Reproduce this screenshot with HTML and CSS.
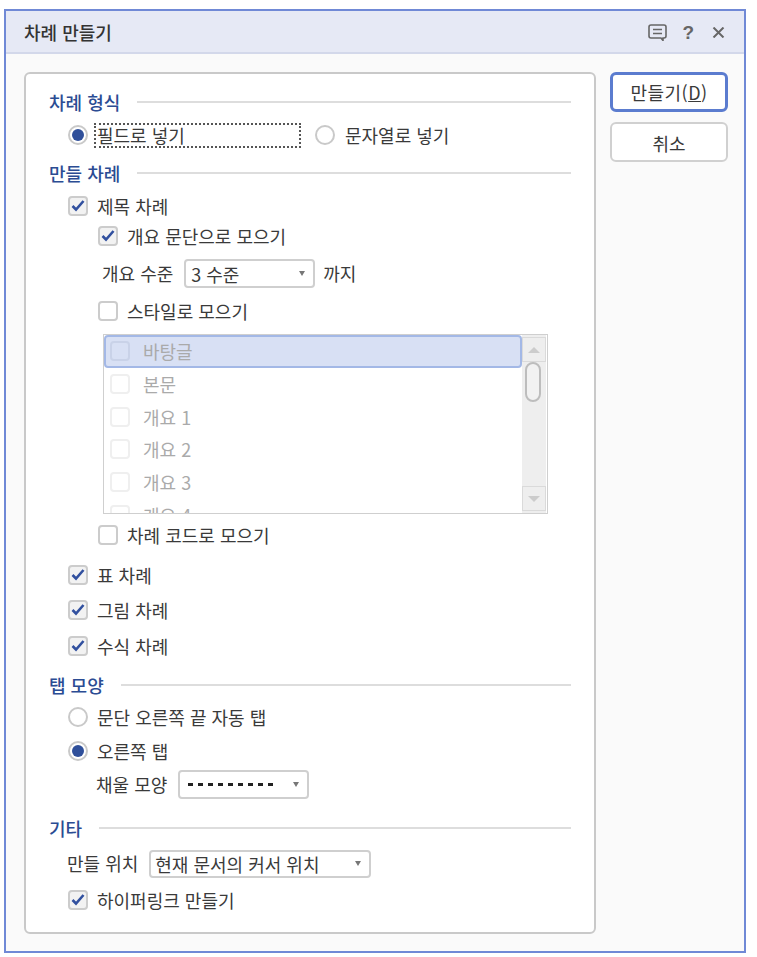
FILE: index.html
```html
<!DOCTYPE html>
<html lang="ko">
<head>
  <meta charset="UTF-8" />
  <title>차례 만들기</title>
  <link rel="stylesheet" href="styles.css">
</head>
<body>

  <div class="dialog">
    <div class="title-bar">
      <span class="title">차례 만들기</span>
      <div class="title-icons">
        <svg class="icon-comment" width="19" height="17" viewBox="0 0 19 17" fill="none" stroke="#666" stroke-width="1.6">
          <path d="M3 1h13a2 2 0 0 1 2 2v9a2 2 0 0 1-2 2h-1v2.5l-2-2.5H3a2 2 0 0 1-2-2V3a2 2 0 0 1 2-2z" />
          <path d="M5 5.5h9M5 9.5h9" />
        </svg>
        <span class="icon-help">?</span>
        <svg class="icon-close" width="13" height="11" viewBox="0 0 13 11" fill="none" stroke="#666" stroke-width="2">
          <path d="M1.5 .5l10 10M11.5 .5l-10 10" />
        </svg>
      </div>
    </div>

    <div class="dialog-body">
      <div class="panel">
        <div class="row section"><span>차례 형식</span><i></i></div>

        <div class="row mt-3 indent-1">
          <span class="radio on"></span>
          <span class="focus-box">필드로 넣기</span>
          <span class="radio second"></span>
          <span class="label second-label">문자열로 넣기</span>
        </div>

        <div class="row section mt-8"><span>만들 차례</span><i></i></div>

        <div class="row mt-3 indent-1">
          <span class="check on"><svg viewBox="0 0 16 16"><path d="M2.5 8l3.5 3.5 7.5-8.5" /></svg></span>
          <span class="label">제목 차례</span>
        </div>
        <div class="row indent-2">
          <span class="check on"><svg viewBox="0 0 16 16"><path d="M2.5 8l3.5 3.5 7.5-8.5" /></svg></span>
          <span class="label">개요 문단으로 모으기</span>
        </div>
        <div class="row mt-7 level-row">
          <span>개요 수준</span>
          <span class="combo combo-level">3 수준<b></b></span>
          <span>까지</span>
        </div>
        <div class="row mt-8 indent-2">
          <span class="check"></span>
          <span class="label">스타일로 모으기</span>
        </div>

        <div class="style-list">
          <div class="style-items">
            <div class="style-item selected"><span class="check"></span>바탕글</div>
            <div class="style-item"><span class="check"></span>본문</div>
            <div class="style-item"><span class="check"></span>개요 1</div>
            <div class="style-item"><span class="check"></span>개요 2</div>
            <div class="style-item"><span class="check"></span>개요 3</div>
            <div class="style-item"><span class="check"></span>개요 4</div>
          </div>
          <div class="scrollbar">
            <div class="scroll-btn"><b class="up"></b></div>
            <div class="scroll-thumb"></div>
            <div class="scroll-track"></div>
            <div class="scroll-btn"><b class="down"></b></div>
          </div>
        </div>

        <div class="row mt-6 indent-2">
          <span class="check"></span>
          <span class="label">차례 코드로 모으기</span>
        </div>
        <div class="row mt-10 indent-1">
          <span class="check on"><svg viewBox="0 0 16 16"><path d="M2.5 8l3.5 3.5 7.5-8.5" /></svg></span>
          <span class="label">표 차례</span>
        </div>
        <div class="row mt-5 indent-1">
          <span class="check on"><svg viewBox="0 0 16 16"><path d="M2.5 8l3.5 3.5 7.5-8.5" /></svg></span>
          <span class="label">그림 차례</span>
        </div>
        <div class="row mt-6 indent-1">
          <span class="check on"><svg viewBox="0 0 16 16"><path d="M2.5 8l3.5 3.5 7.5-8.5" /></svg></span>
          <span class="label">수식 차례</span>
        </div>

        <div class="row section mt-9"><span>탭 모양</span><i></i></div>

        <div class="row mt-2 indent-1">
          <span class="radio"></span>
          <span class="label">문단 오른쪽 끝 자동 탭</span>
        </div>
        <div class="row mt-4 indent-1">
          <span class="radio on"></span>
          <span class="label">오른쪽 탭</span>
        </div>
        <div class="row mt-3 fill-row">
          <span>채울 모양</span>
          <span class="combo combo-fill"><em class="dashes"></em><b></b></span>
        </div>

        <div class="row section mt-14"><span>기타</span><i></i></div>

        <div class="row mt-5 place-row">
          <span>만들 위치</span>
          <span class="combo combo-place">현재 문서의 커서 위치<b></b></span>
        </div>
        <div class="row mt-7 indent-1">
          <span class="check on"><svg viewBox="0 0 16 16"><path d="M2.5 8l3.5 3.5 7.5-8.5" /></svg></span>
          <span class="label">하이퍼링크 만들기</span>
        </div>
      </div>

      <div class="buttons">
        <button class="btn primary">만들기(<u>D</u>)</button>
        <button class="btn">취소</button>
      </div>
    </div>
  </div>

</body>
</html>
```

FILE: styles.css
```css
body {
  margin: 0;
  padding: 9px 0 0 4px;
  background-color: #ffffff;
  color: #3a3a3a;
  font-family: "Noto Sans CJK KR", "Noto Sans", sans-serif;
  font-size: 18px;
}

.dialog {
  width: 742px;
  height: 944px;
  box-sizing: border-box;
  border: 2px solid #7089d6;
  background-color: #fafafa;
}

.title-bar {
  height: 43px;
  box-sizing: border-box;
  padding: 0 19px 0 18px;
  display: flex;
  align-items: center;
  justify-content: space-between;
  background-color: #e6e9f5;
  border-bottom: 2px solid #d3d8ea;
}

.title {
  font-weight: 500;
  color: #333333;
}

.title-icons {
  padding-top: 2px;
  display: flex;
  align-items: center;
}

.icon-help {
  margin: 0 18px 0 15px;
  font-family: "Liberation Sans", sans-serif;
  font-size: 19px;
  font-weight: 700;
  color: #666666;
}

.dialog-body {
  display: flex;
  gap: 14px;
  padding: 18px 0 0 18px;
}

.panel {
  width: 572px;
  height: 862px;
  box-sizing: border-box;
  padding: 13px 23px 0 24px;
  background-color: #ffffff;
  border: 2px solid #c9c9c9;
  border-radius: 6px;
}

.row {
  height: 30px;
  display: flex;
  align-items: center;
}

.mt-2 { margin-top: 2px; }
.mt-3 { margin-top: 3px; }
.mt-4 { margin-top: 4px; }
.mt-5 { margin-top: 5px; }
.mt-6 { margin-top: 6px; }
.mt-7 { margin-top: 7px; }
.mt-8 { margin-top: 8px; }
.mt-9 { margin-top: 9px; }
.mt-10 { margin-top: 10px; }
.mt-14 { margin-top: 14px; }

.indent-1 { padding-left: 18px; }
.indent-2 { padding-left: 48px; }

.section {
  gap: 17px;
  font-weight: 500;
  color: #2b4c93;
}

.section span {
  margin-left: -1px;
}

.section i {
  flex: 1;
  height: 2px;
  background-color: #dddddd;
}

.label {
  margin-left: 9px;
}

.second-label {
  margin-left: 10px;
}

.radio {
  width: 20px;
  height: 20px;
  box-sizing: border-box;
  flex-shrink: 0;
  display: flex;
  align-items: center;
  justify-content: center;
  background-color: #ffffff;
  border: 2px solid #c9c9c9;
  border-radius: 50%;
}

.radio.on::after {
  content: "";
  width: 12px;
  height: 12px;
  background-color: #2f4f9a;
  border-radius: 50%;
}

.radio.second {
  margin-left: 14px;
}

.focus-box {
  width: 207px;
  height: 25px;
  box-sizing: border-box;
  margin-left: 6px;
  padding-left: 1px;
  line-height: 21px;
  border: 2px dotted #555555;
}

.check {
  width: 20px;
  height: 20px;
  box-sizing: border-box;
  flex-shrink: 0;
  background-color: #ffffff;
  border: 2px solid #cccccc;
  border-radius: 4px;
}

.check.on {
  background-color: #f2f2f2;
}

.check svg {
  display: block;
  width: 16px;
  height: 16px;
  fill: none;
  stroke: #31509f;
  stroke-width: 2.6;
}

.combo {
  height: 29px;
  box-sizing: border-box;
  margin-top: 1px;
  padding-left: 5px;
  display: flex;
  align-items: center;
  justify-content: space-between;
  background-color: #ffffff;
  border: 2px solid #cfcfcf;
  border-radius: 4px;
}

.combo b {
  width: 0;
  height: 0;
  margin-right: 8px;
  border-left: 3.5px solid transparent;
  border-right: 3.5px solid transparent;
  border-top: 5px solid #777777;
}

.level-row { padding-left: 52px; gap: 11px; }
.combo-level { width: 131px; }
.level-row span:last-child { margin-left: -3px; }

.fill-row { padding-left: 46px; gap: 11px; }
.combo-fill { width: 131px; }

.dashes {
  width: 88px;
  height: 3px;
  margin-left: 3px;
  background: repeating-linear-gradient(90deg, #222222 0 5px, transparent 5px 10px);
}

.place-row { padding-left: 17px; gap: 11px; }
.combo-place { width: 222px; height: 28px; padding-left: 4px; }

.style-list {
  width: 445px;
  height: 180px;
  box-sizing: border-box;
  margin: 8px 0 0 53px;
  display: flex;
  background-color: #ffffff;
  border: 1px solid #cfcfcf;
}

.style-items {
  flex: 1;
  overflow: hidden;
}

.style-item {
  height: 32.7px;
  box-sizing: border-box;
  padding-left: 5px;
  display: flex;
  align-items: center;
  gap: 13px;
  color: #aaaaaa;
  border: 1px solid transparent;
  border-radius: 4px;
}

.style-item .check {
  border-color: #efefef;
}

.style-item.selected {
  background-color: #d8e0f4;
  border: 2px solid #a3b8e6;
  padding-left: 4px;
}

.style-item.selected .check {
  background-color: transparent;
  border-color: #c9d2e8;
}

.scrollbar {
  width: 24px;
  padding: 2px 0;
  margin-right: 1px;
  display: flex;
  flex-direction: column;
  background-color: #eeeeee;
}

.scroll-btn {
  height: 25px;
  box-sizing: border-box;
  display: flex;
  align-items: center;
  justify-content: center;
  border: 1px solid #dadada;
  flex-shrink: 0;
}

.scroll-btn b {
  width: 0;
  height: 0;
  border-left: 6px solid transparent;
  border-right: 6px solid transparent;
}

.scroll-btn .up { border-bottom: 6px solid #cccccc; }
.scroll-btn .down { border-top: 6px solid #cccccc; }

.scroll-thumb {
  width: 16px;
  height: 40px;
  box-sizing: border-box;
  margin-left: 3px;
  flex-shrink: 0;
  background-color: #f2f2f2;
  border: 2px solid #bdbdbd;
  border-radius: 8px;
}

.scroll-track {
  flex: 1;
}

.buttons {
  width: 118px;
  display: flex;
  flex-direction: column;
  gap: 10px;
}

.btn {
  height: 40px;
  padding: 2px 0 0;
  background-color: #ffffff;
  color: #3a3a3a;
  font-family: inherit;
  font-size: 18px;
  border: 2px solid #d0d0d0;
  border-radius: 6px;
}

.btn.primary {
  padding: 0;
  letter-spacing: 0.5px;
  border: 3px solid #5b7ccf;
}
```
